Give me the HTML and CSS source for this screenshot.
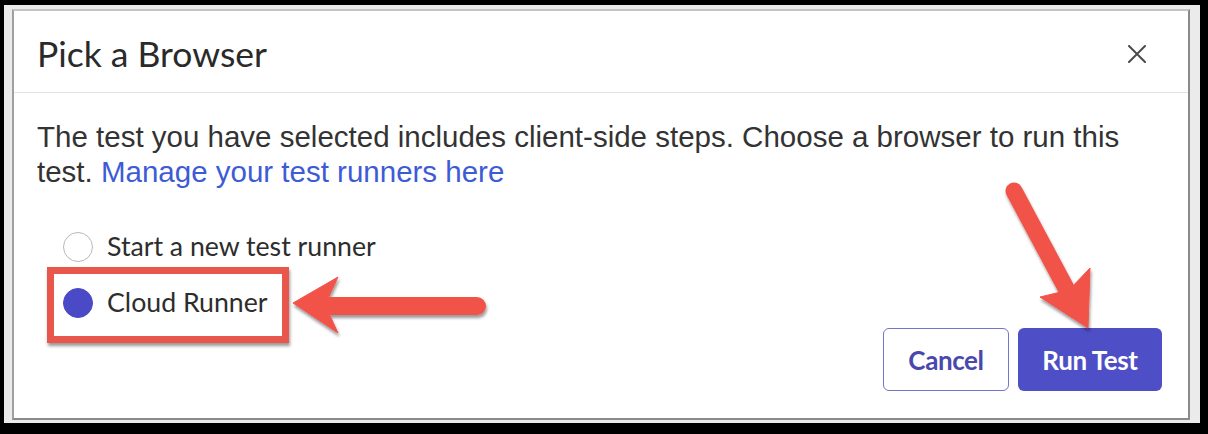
FILE: index.html
```html
<!DOCTYPE html>
<html lang="en">
<head>
<meta charset="utf-8">
<title>Pick a Browser</title>
<link rel="stylesheet" href="styles.css">
</head>
<body>
<div class="screen">
  <div class="backdrop">
    <div class="dialog">
      <div class="dialog-header">
        <h1 class="title">Pick a Browser</h1>
        <button class="close" aria-label="Close">
          <svg width="18" height="18" viewBox="0 0 18 18"><path d="M1 1 L17 17 M17 1 L1 17" stroke="#4a4a4a" stroke-width="2" fill="none" stroke-linecap="round"/></svg>
        </button>
      </div>
      <div class="dialog-body">
        <p class="desc">The test you have selected includes client-side steps. Choose a browser to run this test. <a class="link" href="#">Manage your test runners here</a></p>
        <div class="options">
          <label class="option"><span class="radio"></span><span class="option-label">Start a new test runner</span></label>
          <label class="option"><span class="radio checked"></span><span class="option-label">Cloud Runner</span></label>
        </div>
        <div class="footer">
          <button class="btn btn-outline">Cancel</button>
          <button class="btn btn-primary">Run Test</button>
        </div>
      </div>
    </div>
  </div>
  <div class="highlight"></div>
  <svg class="annotations" width="1208" height="434" viewBox="0 0 1208 434">
    <defs>
      <filter id="sh" x="-20%" y="-20%" width="140%" height="140%">
        <feDropShadow dx="1" dy="3" stdDeviation="1.6" flood-color="#000" flood-opacity="0.4"/>
      </filter>
    </defs>
    <g filter="url(#sh)" fill="#f1534a" stroke="#f1534a">
      <line x1="477" y1="306" x2="326" y2="306" stroke-width="18" stroke-linecap="round"/>
      <polygon points="293,303 338,277 325,305 338,333" stroke-width="1" stroke-linejoin="round"/>
    </g>
    <g filter="url(#sh)" fill="#f1534a" stroke="#f1534a">
      <line x1="1014" y1="191" x2="1068" y2="292" stroke-width="17" stroke-linecap="round"/>
      <polygon points="1088,328 1040,297 1069,290 1090,268" stroke-width="1" stroke-linejoin="round"/>
    </g>
  </svg>
</div>
</body>
</html>
```

FILE: styles.css
```css
* { box-sizing: border-box; }
html, body { margin: 0; padding: 0; background: #000; }
.screen {
  position: relative;
  width: 1208px;
  height: 434px;
  background: #000;
  padding: 5px 8px 11px 4px;
}
.backdrop {
  height: 100%;
  background: #ebebeb;
  padding: 4px 10px 3px 8px;
}
.dialog {
  height: 100%;
  background: #fff;
  border: 2px solid #a0a0a0;
  border-top-color: #c4c4c4;
  border-right-color: #8a8a8a;
  border-bottom-color: #8a8a8a;
  display: flex;
  flex-direction: column;
}
.dialog-header {
  display: flex;
  align-items: center;
  justify-content: space-between;
  padding: 23px 42px 18px 23px;
  border-bottom: 1px solid #e3e3e3;
}
.title {
  margin: 0;
  font-family: Lato, "Noto Sans", sans-serif;
  font-weight: 400;
  font-size: 35.5px;
  line-height: 40px;
  color: #2a2a2a;
}
.close {
  width: 18px;
  height: 18px;
  padding: 0;
  border: 0;
  background: none;
  display: block;
}
.close svg { display: block; }
.dialog-body {
  flex: 1;
  display: flex;
  flex-direction: column;
  padding: 26px 26px 27px 23px;
}
.desc {
  margin: 0;
  max-width: 1100px;
  font-family: "Liberation Sans", Arial, sans-serif;
  font-size: 29.5px;
  line-height: 35px;
  color: #333;
}
.link {
  color: #3e5bd6;
  text-decoration: none;
}
.options {
  margin: 42px 0 0 26px;
  display: flex;
  flex-direction: column;
  gap: 25px;
}
.option {
  display: flex;
  align-items: center;
  gap: 14px;
  height: 31px;
}
.radio {
  width: 30px;
  height: 30px;
  border-radius: 50%;
  border: 1.5px solid #b8b8b8;
  background: #fff;
  flex: none;
}
.radio.checked {
  border-color: #4a4ac6;
  background: #4a4ac6;
}
.option-label {
  font-family: Lato, "Noto Sans", sans-serif;
  font-size: 26.7px;
  line-height: 31px;
  color: #2d2d2d;
}
.footer {
  margin-top: 10px;
  display: flex;
  justify-content: flex-end;
  gap: 9px;
}
.btn {
  height: 63px;
  border-radius: 6px;
  font-family: Lato, "Noto Sans", sans-serif;
  font-weight: 700;
  font-size: 26px;
  letter-spacing: -0.4px;
  padding: 0;
}
.btn-outline {
  width: 126px;
  background: #fff;
  border: 1.5px solid #7474c9;
  color: #4848ad;
}
.btn-primary {
  width: 144px;
  background: #4e4ec6;
  border: 0;
  color: #fff;
}
.highlight {
  position: absolute;
  left: 47px;
  top: 267px;
  width: 242px;
  height: 76px;
  border: 7px solid #e9564b;
  box-shadow: 1px 3px 3px rgba(0, 0, 0, 0.4);
}
.annotations {
  position: absolute;
  left: 0;
  top: 0;
  pointer-events: none;
}
```
